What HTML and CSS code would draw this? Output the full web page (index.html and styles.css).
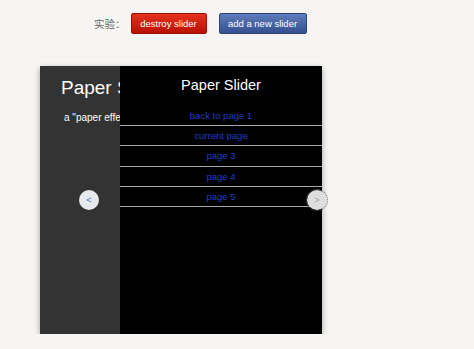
FILE: index.html
```html
<!DOCTYPE html>
<html lang="zh">

<head>
    <meta charset="UTF-8">
    <meta name="viewport" content="width=device-width, initial-scale=1.0">
    <title>Paper Slider</title>
    <link rel="stylesheet" href="styles.css">
</head>

<body>

    <div class="toolbar">
        <span class="toolbar-label">实验：</span>
        <button class="btn btn-destroy">destroy slider</button>
        <button class="btn btn-add">add a new slider</button>
    </div>

    <div class="stage">
        <div class="page page-back">
            <h1 class="back-title">Paper Slider</h1>
            <p class="back-text">a "paper effect" slider</p>
        </div>
        <div class="page page-front">
            <h2 class="front-title">Paper Slider</h2>
            <ul class="page-list">
                <li><a href="#">back to page 1</a></li>
                <li><a href="#">current page</a></li>
                <li><a href="#">page 3</a></li>
                <li><a href="#">page 4</a></li>
                <li><a href="#">page 5</a></li>
            </ul>
        </div>
        <span class="arrow arrow-prev">&lt;</span>
        <span class="arrow arrow-next">&gt;</span>
    </div>

</body>

</html>
```

FILE: styles.css
```css
body {
    margin: 0;
    background-color: #f6f5f3;
    font-family: "Liberation Sans", "Noto Sans CJK SC", sans-serif;
}

.toolbar {
    display: flex;
    align-items: center;
    padding: 13px 0 0 94px;
}

.toolbar-label {
    color: #666;
    font-size: 10.5px;
    margin-right: 5px;
}

.btn {
    height: 21px;
    padding: 0;
    margin-right: 12px;
    border-radius: 2px;
    color: white;
    font-family: inherit;
    font-size: 9.5px;
    cursor: pointer;
}

.btn-destroy {
    width: 76px;
    background: linear-gradient(#e4311f, #b71205);
    border: 1px solid #9c1004;
}

.btn-add {
    width: 88px;
    background: linear-gradient(#5f7cba, #35508f);
    border: 1px solid #2c4379;
}

.stage {
    position: relative;
    display: grid;
    width: 282px;
    height: 268px;
    margin: 32px 0 0 40px;
    box-shadow: 0 2px 6px rgba(0, 0, 0, 0.35);
}

.page {
    grid-area: 1 / 1;
    overflow: hidden;
}

.page-back {
    background-color: #333;
    padding: 10px 0 0 21px;
}

.back-title {
    margin: 0;
    color: white;
    font-size: 19px;
    font-weight: normal;
    line-height: 24px;
    white-space: nowrap;
}

.back-text {
    margin: 12px 0 0 3px;
    color: white;
    font-size: 10px;
    white-space: nowrap;
}

.page-front {
    margin-left: 80px;
    background-color: black;
    padding-top: 9px;
}

.front-title {
    margin: 0 0 11px;
    color: white;
    text-align: center;
    font-size: 14.5px;
    font-weight: normal;
    line-height: 20px;
}

.page-list {
    list-style: none;
    margin: 0;
    padding: 0;
}

.page-list li {
    height: 19.2px;
    line-height: 19px;
    text-align: center;
    font-size: 9.5px;
    border-bottom: 1px solid #a8a8a8;
}

.page-list a {
    color: #1f3fc4;
    text-decoration: none;
}

.arrow {
    position: absolute;
    top: 124px;
    width: 20px;
    height: 20px;
    border-radius: 50%;
    text-align: center;
    line-height: 20px;
    font-size: 9px;
}

.arrow-prev {
    left: 39px;
    background-color: #e6e9ee;
    color: #4a72c4;
}

.arrow-next {
    left: 267px;
    background-color: #dedede;
    color: #999;
    outline: 1px dotted #666;
}
```
